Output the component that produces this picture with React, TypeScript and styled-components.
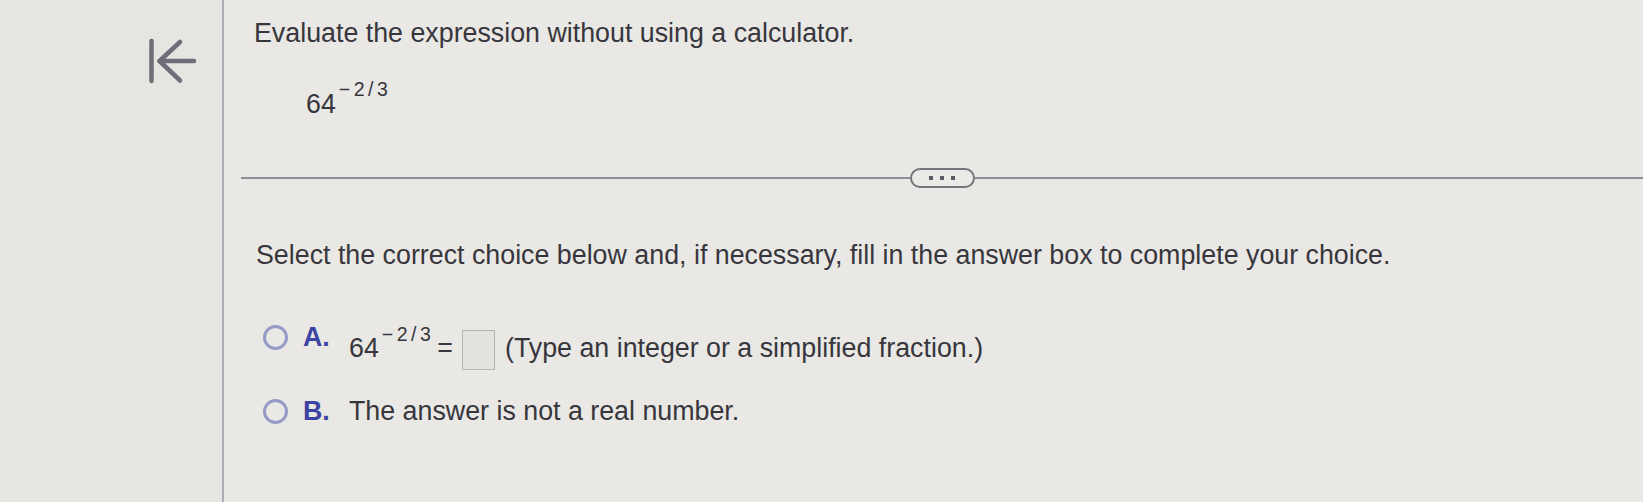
import styled, { createGlobalStyle } from "styled-components";

// global reset
const GlobalStyle = createGlobalStyle`
  html, body {
    margin: 0;
    padding: 0;
    background: #e9e8e5;
  }
  body {
    font-family: "Liberation Sans", Arial, sans-serif;
    color: #37363c;
  }
`;

// layout
const Page = styled.div`
  display: flex;
  height: 502px;
  overflow: hidden;
`;

const Sidebar = styled.aside`
  width: 222px;
  flex-shrink: 0;
  padding-top: 37px;
  background: #e6e5e2;
  border-right: 2px solid #adacb3;
`;

const BackButton = styled.button`
  all: unset;
  display: block;
  margin-left: 146px;
  cursor: pointer;
`;

const Main = styled.main`
  flex: 1;
  display: flex;
  flex-direction: column;
  padding-top: 18px;
`;

const Prompt = styled.section`
  padding-left: 30px;
`;

const Text = styled.p`
  margin: 0;
  font-size: 26.8px;
  line-height: 30px;
`;

const MathLine = styled.div`
  margin-top: 32px;
  padding-left: 52px;
  font-size: 26.8px;
  line-height: 30px;
`;

const Sup = styled.span<{ $raise: number }>`
  display: inline-block;
  margin-left: 3px;
  font-size: 19.5px;
  line-height: 18px;
  letter-spacing: 3.5px;
  vertical-align: ${(p) => p.$raise}px;
`;

// divider with the "more" pill
const Divider = styled.div`
  display: flex;
  align-items: center;
  height: 20px;
  margin: 49px 0 0 17px;
`;

const Rule = styled.div`
  flex: 1;
  height: 2px;
  background: #8f8e95;
`;

const MoreButton = styled.button`
  all: unset;
  box-sizing: border-box;
  width: 65px;
  height: 20px;
  display: flex;
  align-items: center;
  justify-content: center;
  gap: 7px;
  border: 2px solid #75747b;
  border-radius: 10px;
  background: #ebeae7;
`;

const Dot = styled.span`
  width: 4px;
  height: 4px;
  background: #5c5b63;
`;

const Answer = styled.section`
  margin-top: 52px;
  padding-left: 32px;
`;

const Choices = styled.div`
  display: flex;
  flex-direction: column;
  gap: 26px;
  margin-top: 52px;
  padding-left: 7px;
`;

const Choice = styled.label`
  display: flex;
  align-items: flex-start;
  font-size: 26.8px;
  line-height: 30px;
`;

const Radio = styled.span`
  box-sizing: border-box;
  width: 25px;
  height: 25px;
  margin-top: 3px;
  margin-right: 15px;
  border: 3px solid #959ac6;
  border-radius: 50%;
  flex-shrink: 0;
`;

const Letter = styled.span`
  width: 46px;
  flex-shrink: 0;
  font-weight: bold;
  color: #3b44a3;
`;

const Content = styled.div<{ $shift?: number }>`
  margin-top: ${(p) => p.$shift ?? 0}px;
`;

const Eq = styled.span`
  margin: 0 9px 0 3px;
`;

const AnswerBox = styled.span`
  display: inline-block;
  box-sizing: border-box;
  width: 33px;
  height: 40px;
  margin-right: 10px;
  vertical-align: -13px;
  border: 1.5px solid #b4b3b8;
  background: #e3e2df;
`;

function BackIcon() {
  return (
    <svg width="56" height="50" viewBox="0 0 56 50" fill="none">
      <g
        stroke="#6e6d78"
        strokeWidth="4.5"
        strokeLinecap="round"
        strokeLinejoin="round"
      >
        <line x1="5.5" y1="4" x2="5.5" y2="44" />
        <polyline points="34,5 13.5,24 34,43.5" />
        <line x1="13.5" y1="24" x2="48" y2="24" />
      </g>
    </svg>
  );
}

function App() {
  return (
    <>
      <GlobalStyle />
      <Page>
        <Sidebar>
          <BackButton aria-label="Back">
            <BackIcon />
          </BackButton>
        </Sidebar>
        <Main>
          <Prompt>
            <Text>Evaluate the expression without using a calculator.</Text>
            <MathLine>
              64<Sup $raise={17}>−2/3</Sup>
            </MathLine>
          </Prompt>

          <Divider>
            <Rule />
            <MoreButton>
              <Dot />
              <Dot />
              <Dot />
            </MoreButton>
            <Rule />
          </Divider>

          <Answer>
            <Text>
              Select the correct choice below and, if necessary, fill in the
              answer box to complete your choice.
            </Text>
            <Choices>
              <Choice>
                <Radio />
                <Letter>A.</Letter>
                <Content $shift={3}>
                  64<Sup $raise={16}>−2/3</Sup>
                  <Eq>=</Eq>
                  <AnswerBox />
                  (Type an integer or a simplified fraction.)
                </Content>
              </Choice>
              <Choice>
                <Radio />
                <Letter>B.</Letter>
                <Content>The answer is not a real number.</Content>
              </Choice>
            </Choices>
          </Answer>
        </Main>
      </Page>
    </>
  );
}

export default App;
